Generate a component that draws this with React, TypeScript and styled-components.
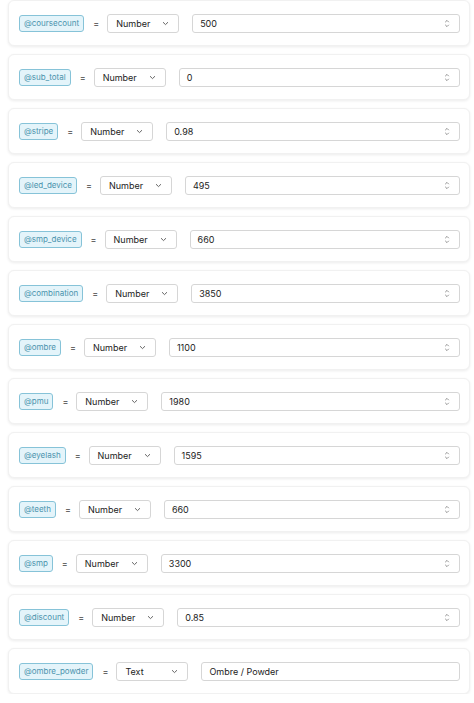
import React from 'react';
import styled, { createGlobalStyle } from 'styled-components';

const GlobalStyle = createGlobalStyle`
    body {
        margin: 0;
        background: #ffffff;
        font-family: Inter, "Noto Sans", sans-serif;
        color: #2b2b2b;
    }
`;

const List = styled.div`
    display: flex;
    flex-direction: column;
    gap: 8px;
    padding: 0 4px 0 8px;
`;

const Card = styled.div`
    display: flex;
    align-items: center;
    height: 46px;
    padding: 0 9px 0 10px;
    box-sizing: border-box;
    background: #fff;
    border: 1px solid #f1f1f1;
    border-radius: 6px;
    box-shadow: 0 1px 3px rgba(0, 0, 0, 0.08);
`;

const Tag = styled.span`
    display: inline-flex;
    align-items: center;
    height: 17px;
    padding: 0 4px;
    box-sizing: border-box;
    font-size: 8px;
    color: #4a93ad;
    background: #e4f4fa;
    border: 1px solid #86c3d8;
    border-radius: 3px;
    white-space: nowrap;
`;

const Equals = styled.span`
    margin: 0 8px 0 9px;
    font-size: 9px;
    color: #444;
`;

const Field = styled.div<{ $width?: number }>`
    display: flex;
    align-items: center;
    justify-content: space-between;
    height: 19px;
    box-sizing: border-box;
    border: 1px solid #d6d6d6;
    border-radius: 3px;
    background: #fff;
    font-size: 9px;
    color: #222;
    padding: 0 9px 0 8px;
    ${(p) => (p.$width ? `width: ${p.$width}px;` : 'flex: 1;')}
`;

const Select = styled(Field)`
    margin-right: 13px;
`;

const Value = styled(Field)`
    padding: 0 9px 0 7px;
`;

const Chevron = () => (
    <svg width="7" height="5" viewBox="0 0 7 5">
        <path d="M1 1.2 L3.5 3.6 L6 1.2" fill="none" stroke="#555" strokeWidth="0.9" />
    </svg>
);

const Spinner = () => (
    <svg width="6" height="9" viewBox="0 0 6 9">
        <path d="M1.2 3.2 L3 1.4 L4.8 3.2" fill="none" stroke="#777" strokeWidth="0.8" />
        <path d="M1.2 5.8 L3 7.6 L4.8 5.8" fill="none" stroke="#777" strokeWidth="0.8" />
    </svg>
);

type Row = { name: string; type: string; value: string };

const rows: Row[] = [
    { name: '@coursecount', type: 'Number', value: '500' },
    { name: '@sub_total', type: 'Number', value: '0' },
    { name: '@stripe', type: 'Number', value: '0.98' },
    { name: '@led_device', type: 'Number', value: '495' },
    { name: '@smp_device', type: 'Number', value: '660' },
    { name: '@combination', type: 'Number', value: '3850' },
    { name: '@ombre', type: 'Number', value: '1100' },
    { name: '@pmu', type: 'Number', value: '1980' },
    { name: '@eyelash', type: 'Number', value: '1595' },
    { name: '@teeth', type: 'Number', value: '660' },
    { name: '@smp', type: 'Number', value: '3300' },
    { name: '@discount', type: 'Number', value: '0.85' },
    { name: '@ombre_powder', type: 'Text', value: 'Ombre / Powder' },
];

const App: React.FunctionComponent = () => {
    return (
        <>
            <GlobalStyle />
            <List>
                {rows.map((row) => (
                    <Card key={row.name}>
                        <Tag>{row.name}</Tag>
                        <Equals>=</Equals>
                        <Select $width={72}>
                            <span>{row.type}</span>
                            <Chevron />
                        </Select>
                        <Value>
                            <span>{row.value}</span>
                            {row.type === 'Number' && <Spinner />}
                        </Value>
                    </Card>
                ))}
            </List>
        </>
    );
}
export default App;
